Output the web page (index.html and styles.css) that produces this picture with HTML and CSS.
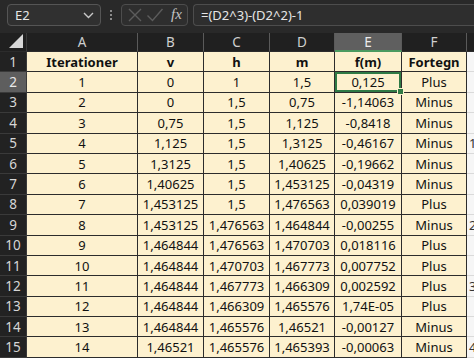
FILE: index.html
```html
<!DOCTYPE html>
<html lang="en">
<head>
    <meta charset="UTF-8">
    <title>Iterationer</title>
    <link rel="stylesheet" href="styles.css">
</head>
<body>
    <div class="topbar">
        <div class="name-box">
            <span>E2</span>
            <svg class="chevron" width="11" height="7" viewBox="0 0 11 7"><path d="M1 1 L5.5 5.5 L10 1" fill="none" stroke="#c8c8c8" stroke-width="1.4"/></svg>
        </div>
        <div class="dots"><i></i><i></i><i></i></div>
        <div class="fx-box">
            <svg width="16" height="16" viewBox="0 0 16 16"><path d="M2 2 L14 14 M14 2 L2 14" stroke="#5c5c5c" stroke-width="1.4"/></svg>
            <svg width="18" height="16" viewBox="0 0 18 16"><path d="M1.5 8.5 L6.5 13.5 L16.5 2" fill="none" stroke="#5c5c5c" stroke-width="1.4"/></svg>
            <span class="fx">fx</span>
        </div>
        <div class="formula">=(D2^3)-(D2^2)-1</div>
    </div>

    <div class="sheet">
        <div class="row head">
            <div class="corner"><svg width="14" height="14" viewBox="0 0 14 14"><path d="M14 0 L14 14 L0 14 Z" fill="#d8d8d8"/></svg></div>
            <div>A</div><div>B</div><div>C</div><div>D</div><div class="sel">E</div><div>F</div><div class="blank"></div>
        </div>
        <div class="row bold">
            <div class="num">1</div><div>Iterationer</div><div>v</div><div>h</div><div>m</div><div>f(m)</div><div>Fortegn</div><div class="out"></div>
        </div>
        <div class="row">
            <div class="num cur">2</div><div>1</div><div>0</div><div>1</div><div>1,5</div><div class="active">0,125<i class="handle"></i></div><div>Plus</div><div class="out"></div>
        </div>
        <div class="row">
            <div class="num">3</div><div>2</div><div>0</div><div>1,5</div><div>0,75</div><div>-1,14063</div><div>Minus</div><div class="out"></div>
        </div>
        <div class="row">
            <div class="num">4</div><div>3</div><div>0,75</div><div>1,5</div><div>1,125</div><div>-0,8418</div><div>Minus</div><div class="out"></div>
        </div>
        <div class="row">
            <div class="num">5</div><div>4</div><div>1,125</div><div>1,5</div><div>1,3125</div><div>-0,46167</div><div>Minus</div><div class="out">1</div>
        </div>
        <div class="row">
            <div class="num">6</div><div>5</div><div>1,3125</div><div>1,5</div><div>1,40625</div><div>-0,19662</div><div>Minus</div><div class="out"></div>
        </div>
        <div class="row">
            <div class="num">7</div><div>6</div><div>1,40625</div><div>1,5</div><div>1,453125</div><div>-0,04319</div><div>Minus</div><div class="out"></div>
        </div>
        <div class="row">
            <div class="num">8</div><div>7</div><div>1,453125</div><div>1,5</div><div>1,476563</div><div>0,039019</div><div>Plus</div><div class="out"></div>
        </div>
        <div class="row">
            <div class="num">9</div><div>8</div><div>1,453125</div><div>1,476563</div><div>1,464844</div><div>-0,00255</div><div>Minus</div><div class="out">2</div>
        </div>
        <div class="row">
            <div class="num">10</div><div>9</div><div>1,464844</div><div>1,476563</div><div>1,470703</div><div>0,018116</div><div>Plus</div><div class="out"></div>
        </div>
        <div class="row">
            <div class="num">11</div><div>10</div><div>1,464844</div><div>1,470703</div><div>1,467773</div><div>0,007752</div><div>Plus</div><div class="out"></div>
        </div>
        <div class="row">
            <div class="num">12</div><div>11</div><div>1,464844</div><div>1,467773</div><div>1,466309</div><div>0,002592</div><div>Plus</div><div class="out">3</div>
        </div>
        <div class="row">
            <div class="num">13</div><div>12</div><div>1,464844</div><div>1,466309</div><div>1,465576</div><div>1,74E-05</div><div>Plus</div><div class="out"></div>
        </div>
        <div class="row">
            <div class="num">14</div><div>13</div><div>1,464844</div><div>1,465576</div><div>1,46521</div><div>-0,00127</div><div>Minus</div><div class="out"></div>
        </div>
        <div class="row">
            <div class="num">15</div><div>14</div><div>1,46521</div><div>1,465576</div><div>1,465393</div><div>-0,00063</div><div>Minus</div><div class="out">4</div>
        </div>
    </div>
</body>
</html>
```
FILE: styles.css
```css
body {
    margin: 0;
    width: 474px;
    height: 358px;
    overflow: hidden;
    background: #1f1f1f;
    font-family: 'Noto Sans', 'Liberation Sans', sans-serif;
}
.topbar {
    height: 33px;
    background: #292929;
    display: flex;
    align-items: flex-start;
    padding: 4px 0 0 7px;
    box-sizing: border-box;
}
.name-box {
    width: 94px;
    height: 22px;
    box-sizing: border-box;
    border: 1px solid #555;
    border-radius: 4px;
    background: #303030;
    color: #e6e6e6;
    font-size: 13px;
    display: flex;
    align-items: center;
    justify-content: space-between;
    padding: 0 6px 0 7px;
}
.chevron {
    margin-top: 1px;
}
.dots {
    width: 20px;
    height: 22px;
    display: flex;
    flex-direction: column;
    align-items: center;
    justify-content: center;
    gap: 2px;
}
.dots i {
    width: 2px;
    height: 2px;
    background: #8a8a8a;
}
.fx-box {
    width: 67px;
    height: 22px;
    box-sizing: border-box;
    border: 1px solid #4d4d4d;
    border-radius: 4px;
    background: #2e2e2e;
    display: flex;
    align-items: center;
    gap: 3px;
    padding-left: 5px;
}
.fx {
    font-family: 'Liberation Serif', serif;
    font-style: italic;
    font-size: 15px;
    color: #c4c4c4;
    margin-left: 4px;
    margin-top: -2px;
}
.formula {
    flex: 1;
    margin-left: 5px;
    height: 22px;
    box-sizing: border-box;
    border: 1px solid #4d4d4d;
    border-right: none;
    border-radius: 4px 0 0 4px;
    background: #2e2e2e;
    color: #e6e6e6;
    font-size: 13px;
    line-height: 20px;
    padding-left: 7px;
}
.sheet {
    background: #1f1f1f;
}
.row {
    display: grid;
    grid-template-columns: 27px 111px 66px 66px 65px 67px 65px 1fr;
    height: 20.4px;
}
.row > div {
    box-sizing: border-box;
    background: #fdf1cf;
    border-right: 1px solid #2c2c2c;
    border-bottom: 1px solid #2c2c2c;
    font-size: 13px;
    color: #111;
    display: flex;
    align-items: center;
    justify-content: center;
    white-space: nowrap;
    overflow: hidden;
}
.row.bold > div {
    font-weight: bold;
}
.row.bold > .num {
    font-weight: normal;
}
.row > .num {
    background: #222;
    color: #d6d6d6;
    font-size: 13.5px;
    border-right: 1px solid #3a3a3a;
    border-bottom: 1px solid #3a3a3a;
}
.row > .num.cur {
    background: #5e5e5e;
    color: #e8e8e8;
}
.row > .out {
    background: #f6f6f6;
    border-right: none;
    border-bottom: 1px solid #dadada;
    justify-content: flex-start;
    padding-left: 2px;
    font-weight: normal;
    color: #333;
}
.row.head {
    height: 19px;
}
.row.head > div {
    background: #202020;
    color: #cfcfcf;
    font-size: 13.5px;
    border-right: 1px solid #5a5a5a;
    border-bottom: 1px solid #2c2c2c;
}
.row.head > .corner {
    justify-content: flex-end;
    align-items: flex-end;
    padding: 0 3px 3px 0;
    border-right: 1px solid #3a3a3a;
}
.row.head > .sel {
    background: #5f5f5f;
    color: #ececec;
    border-bottom: 2px solid #4a9a60;
}
.row.head > .blank {
    background: #202020;
    border-right: none;
}
.row > .active {
    position: relative;
    overflow: visible;
    box-shadow: inset 0 0 0 2px #2f7a45;
}
.handle {
    position: absolute;
    right: -3px;
    bottom: -3px;
    width: 5px;
    height: 5px;
    background: #2f7a45;
    border: 1px solid #fdf1cf;
    z-index: 2;
}
```
